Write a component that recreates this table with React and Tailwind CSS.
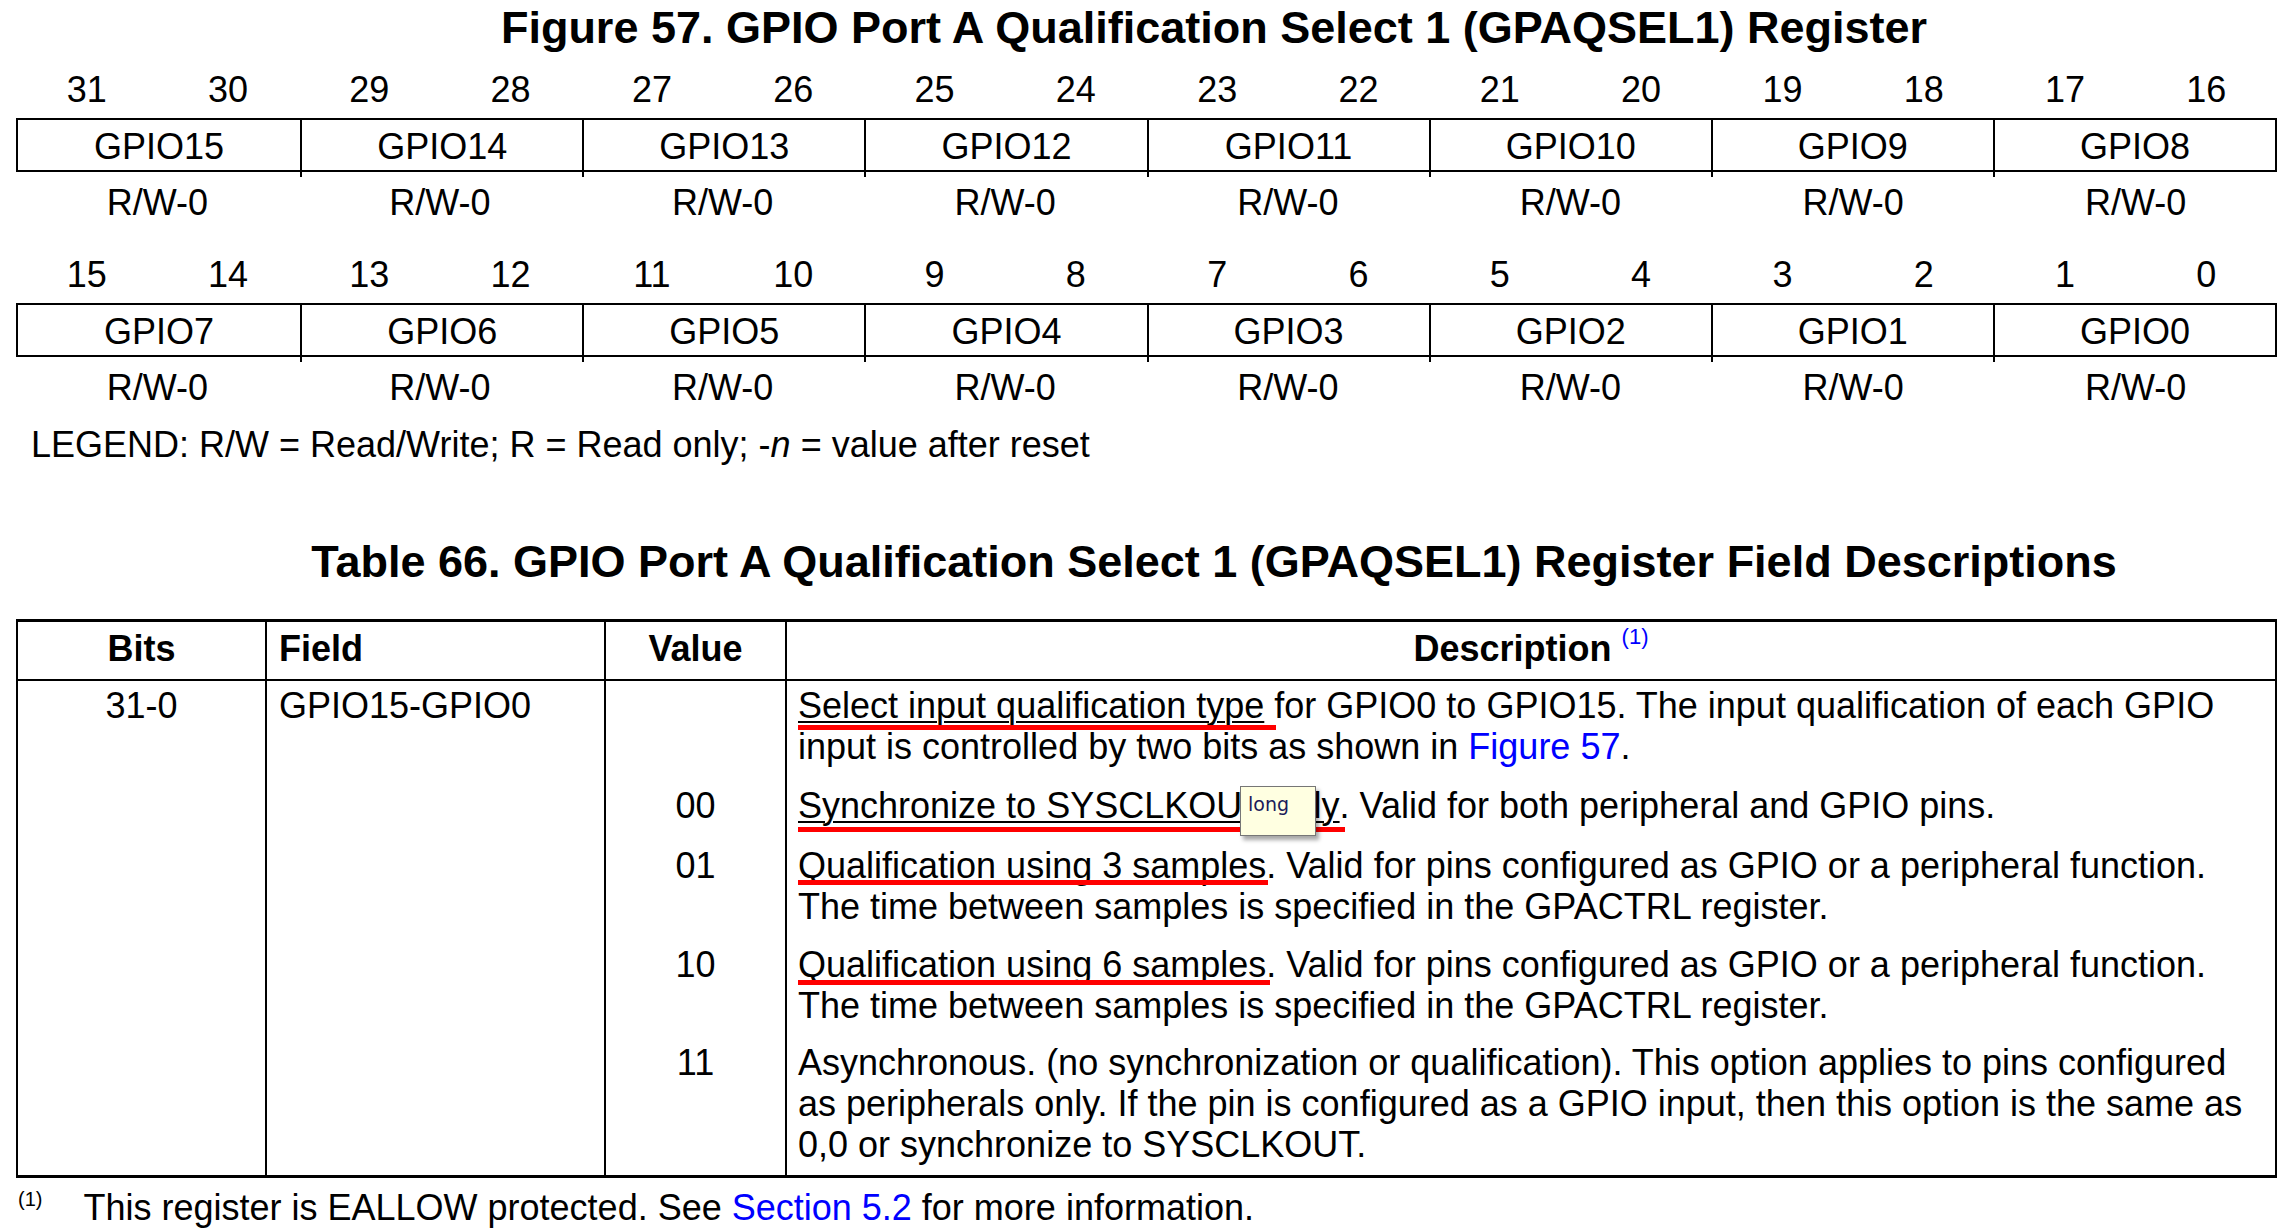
import React from "react";

function RegisterGroup({ high }) {
  const bits = Array.from({ length: 16 }, (_, i) => (high ? 31 : 15) - i);
  const names = Array.from({ length: 8 }, (_, i) => `GPIO${(high ? 15 : 7) - i}`);
  return (
    <div>
      <div className="ml-[16px] w-[2261px] grid grid-cols-16 h-[41px] leading-[41px]">
        {bits.map((b) => (
          <div key={b} className="text-center">
            {b}
          </div>
        ))}
      </div>
      <div className="ml-[16px] w-[2261px] mt-[8px] h-[54px] grid grid-cols-8 border-2 border-black">
        {names.map((n, i) => (
          <div
            key={n}
            className={
              i === 0
                ? "flex items-center justify-center pb-[3px]"
                : "flex items-center justify-center pb-[3px] border-l-2 border-black"
            }
          >
            {n}
          </div>
        ))}
      </div>
      <div className="ml-[16px] w-[2261px] mt-[10px] grid grid-cols-8 h-[41px] leading-[41px]">
        {names.map((n) => (
          <div key={n} className="text-center">
            R/W-0
          </div>
        ))}
      </div>
    </div>
  );
}

function Mark({ children, bar }) {
  return (
    <span className="relative underline decoration-[1.5px] underline-offset-[3px]">
      {children}
      <span className={"absolute left-0 h-[5px] bg-[#ff0000] " + bar} />
    </span>
  );
}

export default function App() {
  return (
    <div className="relative w-[2292px] h-[1231px] overflow-hidden bg-white text-black text-[36px] font-['Liberation_Sans',Arial,Helvetica,sans-serif]">
      {/* Figure title */}
      <div className="h-[56px] pt-[2px] pl-[136px] text-center text-[45px] font-bold leading-[52px]">
        Figure 57. GPIO Port A Qualification Select 1 (GPAQSEL1) Register
      </div>

      <div className="mt-[13px]">
        <RegisterGroup high />
      </div>
      <div className="mt-[31px]">
        <RegisterGroup high={false} />
      </div>

      <div className="mt-[16px] pl-[31px] leading-[41px]">
        LEGEND: R/W = Read/Write; R = Read only; -<span className="italic">n</span> = value after reset
      </div>

      {/* Table title */}
      <div className="mt-[71px] pl-[136px] text-center text-[45px] font-bold leading-[52px]">
        Table 66. GPIO Port A Qualification Select 1 (GPAQSEL1) Register Field Descriptions
      </div>

      {/* Table */}
      <div className="mt-[31px] ml-[16px] w-[2261px] border-x-2 border-t-[3px] border-b-[3px] border-black leading-[41px]">
        <div className="grid grid-cols-[247px_339px_181px_1fr] h-[59px] border-b-2 border-black font-bold">
          <div className="flex items-center justify-center pb-[5px]">Bits</div>
          <div className="flex items-center border-l-2 border-black pl-[12px] pb-[5px]">Field</div>
          <div className="flex items-center justify-center border-l-2 border-black pb-[5px]">Value</div>
          <div className="flex items-center justify-center border-l-2 border-black pb-[5px]">
            <span>Description</span>
            <span className="relative -top-[11px] ml-[10px] text-[22px] font-normal leading-[24px] text-[#0000ff]">(1)</span>
          </div>
        </div>

        <div className="grid grid-cols-[247px_339px_181px_1fr]">
          <div className="row-span-5 text-center pt-[4px]">31-0</div>
          <div className="row-span-5 border-l-2 border-black pl-[12px] pt-[4px]">GPIO15-GPIO0</div>

          <div className="border-l-2 border-black text-center pt-[4px]"></div>
          <div className="border-l-2 border-black pl-[11px] pt-[4px] whitespace-nowrap">
            <Mark bar="top-[40px] w-[478px]">Select input qualification type</Mark> for GPIO0 to GPIO15. The input
            qualification of each GPIO
            <br />
            input is controlled by two bits as shown in <span className="text-[#0000ff]">Figure 57</span>.
          </div>

          <div className="border-l-2 border-black text-center pt-[18px]">00</div>
          <div className="border-l-2 border-black pl-[11px] pt-[18px] whitespace-nowrap">
            <Mark bar="top-[42px] w-[547px]">Synchronize to SYSCLKOUT only</Mark>. Valid for both peripheral and GPIO
            pins.
          </div>

          <div className="border-l-2 border-black text-center pt-[19px]">01</div>
          <div className="border-l-2 border-black pl-[11px] pt-[19px] whitespace-nowrap">
            <Mark bar="top-[35px] w-[470px]">Qualification using 3 samples</Mark>. Valid for pins configured as GPIO or
            a peripheral function.
            <br />
            The time between samples is specified in the GPACTRL register.
          </div>

          <div className="border-l-2 border-black text-center pt-[17px]">10</div>
          <div className="border-l-2 border-black pl-[11px] pt-[17px] whitespace-nowrap">
            <Mark bar="top-[36px] w-[472px]">Qualification using 6 samples</Mark>. Valid for pins configured as GPIO or
            a peripheral function.
            <br />
            The time between samples is specified in the GPACTRL register.
          </div>

          <div className="border-l-2 border-black text-center pt-[16px] pb-[10px]">11</div>
          <div className="border-l-2 border-black pl-[11px] pt-[16px] pb-[10px] whitespace-nowrap">
            Asynchronous. (no synchronization or qualification). This option applies to pins configured
            <br />
            as peripherals only. If the pin is configured as a GPIO input, then this option is the same as
            <br />
            0,0 or synchronize to SYSCLKOUT.
          </div>
        </div>
      </div>

      {/* Footnote */}
      <div className="mt-[9px] flex items-start leading-[41px]">
        <span className="pl-[18px] text-[20px] leading-[24px]">(1)</span>
        <span className="ml-[41px]">
          This register is EALLOW protected. See <span className="text-[#0000ff]">Section 5.2</span> for more
          information.
        </span>
      </div>

      {/* Tooltip overlay */}
      <div className="absolute left-[1240px] top-[786px] w-[76px] h-[50px] border border-[#767676] bg-[#ffffe1] shadow-[3px_4px_4px_rgba(0,0,0,0.35)] pl-[7px] pt-[5px] leading-[24px]">
        <span className="block font-['DejaVu_Sans',Verdana,sans-serif] text-[19px] leading-[24px] text-[#1a1a5a]">long</span>
      </div>
    </div>
  );
}
